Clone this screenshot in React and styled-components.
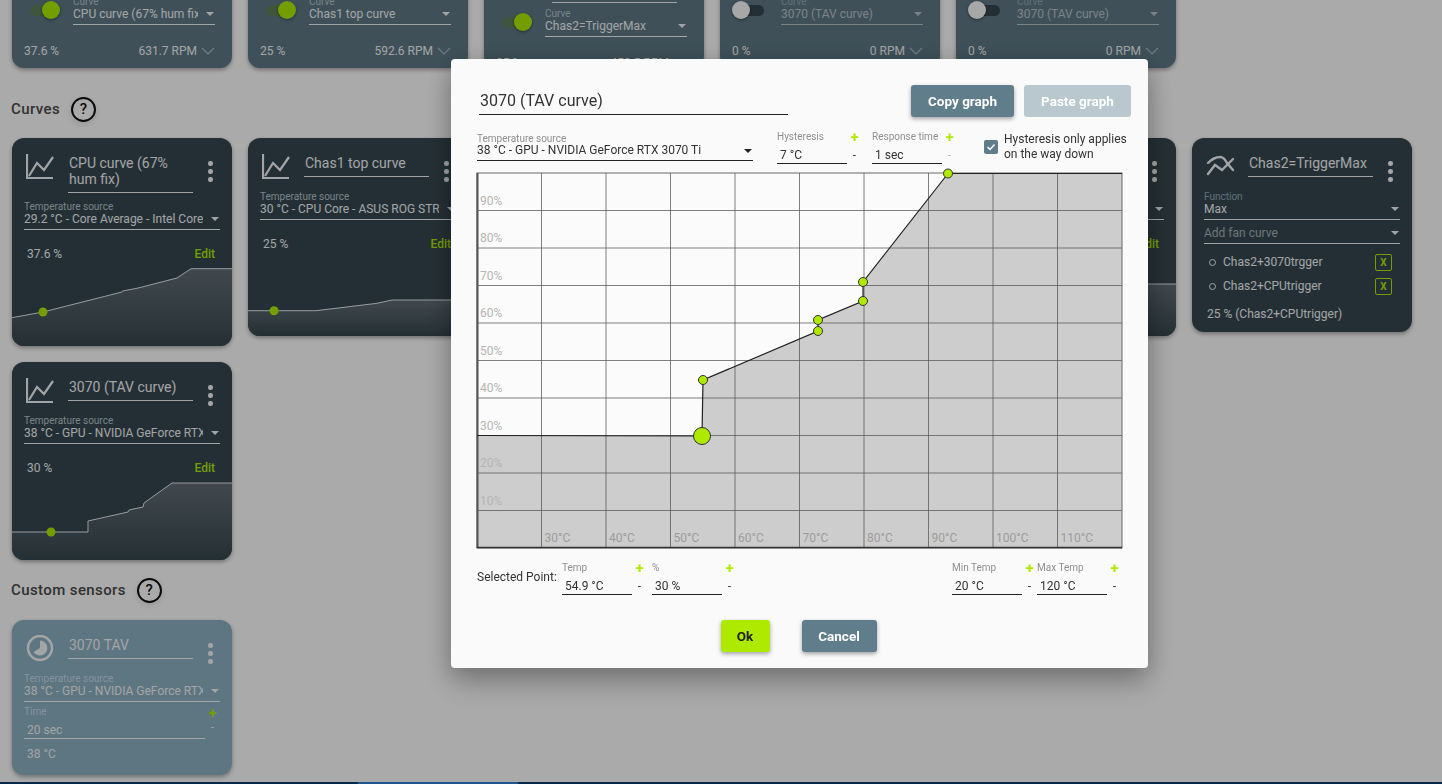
import React from 'react';
import styled, { createGlobalStyle } from 'styled-components';

const GlobalStyle = createGlobalStyle`
  html, body { margin: 0; padding: 0; height: 100%; overflow: hidden; }
  body { font-family: Roboto, "Liberation Sans", sans-serif; background: #fefefe; }
  * { box-sizing: border-box; }
`;

const Page = styled.div`
  height: 784px;
  overflow: hidden;
  display: flex;
  flex-direction: column;
  padding: 0 12px;
`;

const Grid = styled.div`
  display: grid;
  grid-template-columns: repeat(6, 220px);
  gap: 16px;
  align-items: start;
`;

const FanGrid = styled(Grid)`
  margin-top: -40px;
  align-items: stretch;
  flex: none;
`;

const SectionTitle = styled.div`
  display: flex;
  align-items: center;
  gap: 11px;
  height: 24px;
  margin: ${p => p.$top}px 0 ${p => p.$bottom}px -1px;
  font-size: 15px;
  font-weight: 500;
  letter-spacing: 0.4px;
  color: #4a4a4a;
`;

const Help = styled.span`
  width: 25px;
  height: 25px;
  border-radius: 50%;
  border: 2px solid #111;
  display: flex;
  align-items: center;
  justify-content: center;
  font-size: 15px;
  font-weight: 500;
  color: #111;
  box-shadow: 0 2px 6px rgba(0,0,0,.12);
`;

const Spacer = styled.div`
  flex: 1;
`;

const Taskbar = styled.div`
  flex: none;
  display: flex;
  height: 2px;
  margin: 0 -12px;
  padding-left: 358px;
  background: #0f3c70;
`;

const TaskbarActive = styled.span`
  width: 160px;
  background: #2d7fd1;
`;

const Card = styled.div`
  position: relative;
  border-radius: 12px;
  background: #37474f;
  box-shadow: 0 2px 4px rgba(0,0,0,.35);
  color: #f2f5f6;
  overflow: hidden;
`;

const FanCard = styled(Card)`
  height: 108px;
  padding: 37px 12px 0;
  background: #5e7885;
  overflow: visible;
`;

const NameStub = styled.div`
  height: 6px;
  width: 125px;
  margin: 0 0 6px 56px;
  border-bottom: 1px solid #f2f5f6;
`;

const FanRow = styled.div`
  display: flex;
  align-items: center;
`;

const Toggle = styled.div`
  position: relative;
  flex: none;
  width: 49px;
  height: 28px;
  margin-top: -2px;
  &::before {
    content: '';
    position: absolute;
    left: 6px;
    top: 9px;
    width: 26px;
    height: 11px;
    border-radius: 6px;
    background: ${p => (p.$on ? '#5f7f5a' : '#37474f')};
  }
  &::after {
    content: '';
    position: absolute;
    left: ${p => (p.$on ? 18 : 0)}px;
    top: 5px;
    width: 18px;
    height: 18px;
    border-radius: 50%;
    background: ${p => (p.$on ? '#aeea00' : '#fafafa')};
    box-shadow: 0 1px 3px rgba(0,0,0,.4);
  }
`;

const SelectBox = styled.div`
  width: 142px;
  opacity: ${p => (p.$dim ? 0.6 : 1)};
`;

const SmallLabel = styled.div`
  height: 10px;
  font-size: 10px;
  line-height: 10px;
  color: ${p => p.$color || '#b6c4cb'};
  white-space: nowrap;
`;

const SelectWrap = styled.div`
  position: relative;
  height: ${p => p.$height || 18}px;
  padding: ${p => p.$top || 0}px 17px 0 0;
  font-size: 12px;
  line-height: ${p => p.$leading || 14}px;
  color: ${p => p.$color || 'inherit'};
  border-bottom: 1px solid ${p => p.$line || '#f2f5f6'};
  &::after {
    content: '';
    position: absolute;
    right: 1px;
    top: ${p => (p.$top || 0) + 5}px;
    border-left: 4px solid transparent;
    border-right: 4px solid transparent;
    border-top: 4px solid ${p => p.$line || '#f2f5f6'};
  }
`;

const SelectText = styled.div`
  white-space: nowrap;
  overflow: hidden;
`;

const Select = ({ children, ...rest }) => (
  <SelectWrap {...rest}><SelectText>{children}</SelectText></SelectWrap>
);

const FanFooter = styled.div`
  display: flex;
  align-items: center;
  height: 16px;
  margin-top: 18px;
  padding-right: 4px;
  font-size: 12px;
  svg { margin-left: 3px; }
`;

const Rpm = styled.span`
  margin-left: auto;
`;

const CurveHead = styled.div`
  display: flex;
  align-items: flex-start;
  min-height: 54px;
  padding: 15px 12px 9px 14px;
`;

const HeadIcon = styled.svg`
  flex: none;
  width: 30px;
  height: 30px;
  margin-right: 12px;
`;

const NameText = styled.div`
  width: 125px;
  padding: 2px 0 5px 1px;
  font-size: 14px;
  line-height: 16px;
  color: #f2f5f6;
  border-bottom: 1px solid #f2f5f6;
`;

const Kebab = styled.div`
  display: flex;
  flex-direction: column;
  gap: 3.5px;
  margin: 8px 0 0 15px;
  i {
    width: 4.5px;
    height: 4.5px;
    border-radius: 50%;
    background: #f2f5f6;
  }
`;

const CardBody = styled.div`
  padding: 0 12px;
`;

const StatusRow = styled.div`
  display: flex;
  justify-content: space-between;
  height: 16px;
  margin: ${p => p.$top ?? 16}px 0 -1px;
  padding: 0 5px 0 3px;
  font-size: 12px;
  line-height: 16px;
`;

const EditLink = styled.span`
  color: #aeea00;
  font-weight: 500;
`;

const Spark = styled.svg`
  display: block;
  width: 220px;
  height: 85px;
`;

const FunctionCard = styled(Card)`
  height: 194px;
`;

const MemberList = styled.div`
  margin-top: 6px;
`;

const MemberRow = styled.div`
  display: flex;
  align-items: center;
  height: 24px;
  padding: 0 8px 0 5px;
  font-size: 12px;
  &::before {
    content: '';
    width: 5px;
    height: 5px;
    margin-right: 7px;
    border-radius: 50%;
    border: 1px solid #f2f5f6;
  }
`;

const RemoveBtn = styled.span`
  margin-left: auto;
  width: 17px;
  height: 17px;
  border: 1px solid #aeea00;
  border-radius: 2px;
  color: #aeea00;
  font-size: 10px;
  font-weight: 700;
  display: flex;
  align-items: center;
  justify-content: center;
`;

const SensorCard = styled(Card)`
  height: 155px;
  background: #8cafc2;
`;

const SensorField = styled.div`
  display: grid;
  grid-template-columns: 181px 15px;
  grid-template-rows: 12px 20px;
  margin-top: 5px;
  font-size: 12px;
`;

const Overlay = styled.div`
  position: fixed;
  inset: 0;
  background: rgba(0,0,0,.33);
`;

const Dialog = styled.div`
  position: fixed;
  left: 451px;
  top: 59px;
  width: 697px;
  height: 609px;
  padding: 26px 17px 0 26px;
  background: #fafafa;
  border-radius: 4px;
  color: #222;
  box-shadow: 0 16px 30px rgba(0,0,0,.22), 0 4px 24px rgba(0,0,0,.2);
`;

const DialogHead = styled.div`
  display: flex;
  align-items: flex-start;
`;

const DialogName = styled.div`
  width: 309px;
  height: 30px;
  margin: 0 auto 0 2px;
  padding: 6px 0 0 1px;
  font-size: 16px;
  line-height: 20px;
  color: #333;
  border-bottom: 1px solid #222;
`;

const ActionButton = styled.button`
  height: 32px;
  min-width: ${p => p.$width}px;
  margin-left: ${p => p.$gap || 0}px;
  padding: 0;
  border: 0;
  border-radius: 3px;
  font-family: inherit;
  font-size: 13.5px;
  font-weight: 700;
  color: ${p => p.$text || '#fff'};
  background: ${p => p.$bg || '#607d8b'};
  box-shadow: ${p => (p.$flat ? 'none' : '0 2px 4px rgba(0,0,0,.35)')};
`;

const OptionsRow = styled.div`
  display: flex;
  align-items: flex-start;
  margin-top: 14px;
  height: 42px;
`;

const DialogSelect = styled.div`
  width: 276px;
  margin-top: 3px;
`;

const Field = styled.div`
  display: grid;
  grid-template-columns: 70px 15px;
  grid-template-rows: 12px 17px;
  row-gap: 4px;
  margin-left: ${p => p.$left || 0}px;
  font-size: 12px;
  color: #333;
`;

const FieldLabel = styled.span`
  font-size: 10px;
  line-height: 12px;
  color: #8f8f8f;
  white-space: nowrap;
`;

const Plus = styled.span`
  font-size: 15px;
  line-height: 12px;
  font-weight: 700;
  text-align: center;
  color: #aeea00;
`;

const FieldValue = styled.span`
  padding-left: 3px;
  line-height: 16px;
  border-bottom: 1px solid #222;
  white-space: nowrap;
`;

const SensorValue = styled(FieldValue)`
  padding-top: 3px;
  border-color: #f2f5f6;
`;

const Minus = styled.span`
  text-align: center;
  line-height: 16px;
  color: ${p => p.$color || '#444'};
`;

const CheckOption = styled.div`
  display: flex;
  align-items: center;
  gap: 6px;
  margin: 1px 0 0 27px;
  font-size: 12px;
  line-height: 15px;
  color: #333;
`;

const CheckBox = styled.span`
  flex: none;
  width: 14px;
  height: 14px;
  border-radius: 2px;
  background: #607d8b;
  display: flex;
  align-items: center;
  justify-content: center;
`;

const Graph = styled.svg`
  display: block;
  width: 645px;
  height: 376px;
  overflow: visible;
`;

const PointRow = styled.div`
  display: flex;
  align-items: flex-start;
  margin-top: 13px;
`;

const PointTitle = styled.span`
  width: 85px;
  margin-top: 8px;
  font-size: 12px;
  white-space: nowrap;
  color: #333;
`;

const PointEnd = styled.div`
  width: 9px;
`;

const DialogActions = styled.div`
  display: flex;
  justify-content: center;
  gap: 32px;
  margin: 25px 0 0 -11px;
`;

const CurveIcon = () => (
  <HeadIcon viewBox="0 0 30 30" fill="none" stroke="#f2f5f6" strokeWidth="2.2">
    <path d="M1 1v24h26" />
    <path d="M3 23l8-13 7 7 9-13" />
  </HeadIcon>
);

const MixIcon = () => (
  <HeadIcon viewBox="0 0 30 30" fill="none" stroke="#f2f5f6" strokeWidth="2.4" strokeLinecap="round">
    <path d="M2 10c3-3 8-6 12-6 3 0 5 2 7 6l6 7" />
    <path d="M2 21l7-9 7 5 11-11" />
  </HeadIcon>
);

const SensorIcon = () => (
  <HeadIcon viewBox="0 0 30 30">
    <circle cx="14" cy="13" r="12" fill="none" stroke="#f2f5f6" strokeWidth="2.5" />
    <path d="M14 5.500a7.500 7.500 0 1 1-6.500 11.500l6.500-4z" fill="#f2f5f6" />
  </HeadIcon>
);

const Dots = () => (
  <Kebab><i /><i /><i /></Kebab>
);

const fans = [
  { curve: 'CPU curve (67% hum fix)', pct: '37.6 %', rpm: '631.7 RPM', on: true },
  { curve: 'Chas1 top curve', pct: '25 %', rpm: '592.6 RPM', on: true },
  { curve: 'Chas2=TriggerMax', pct: '25 %', rpm: '459.5 RPM', on: true, raised: true },
  { curve: '3070 (TAV curve)', pct: '0 %', rpm: '0 RPM' },
  { curve: '3070 (TAV curve)', pct: '0 %', rpm: '0 RPM' },
];

const FanTile = ({ curve, pct, rpm, on, raised }) => (
  <FanCard>
    {raised && <NameStub />}
    <FanRow>
      <Toggle $on={on} />
      <SelectBox $dim={!on}>
        <SmallLabel>Curve</SmallLabel>
        <Select>{curve}</Select>
      </SelectBox>
    </FanRow>
    <FanFooter>
      <span>{pct}</span>
      <Rpm>{rpm}</Rpm>
      <svg width="16" height="10" viewBox="0 0 16 10" fill="none" stroke="#a9bac2" strokeWidth="1.2">
        <path d="M2 2l6 6 6-6" />
      </svg>
    </FanFooter>
  </FanCard>
);

const Sparkline = ({ id, points, dot }) => {
  const line = points.map(p => p.join(',')).join(' ');
  return (
    <Spark viewBox="0 0 220 85">
      <defs>
        <linearGradient id={id} x1="0" y1="0" x2="0" y2="1">
          <stop offset="0" stopColor="#616d75" />
          <stop offset="1" stopColor="#37474f" />
        </linearGradient>
      </defs>
      <polygon points={`0,85 ${line} 220,85`} fill={`url(#${id})`} />
      <polyline points={line} fill="none" stroke="#e4e8ea" strokeWidth="1" />
      {dot && <circle cx={dot[0]} cy={dot[1]} r="4.500" fill="#aeea00" />}
    </Spark>
  );
};

const CurveTile = ({ name, source, pct, points, dot, id }) => (
  <Card>
    <CurveHead>
      <CurveIcon />
      <NameText>{name}</NameText>
      <Dots />
    </CurveHead>
    <CardBody>
      <SmallLabel>Temperature source</SmallLabel>
      <Select>{source}</Select>
      <StatusRow>
        <span>{pct}</span>
        <EditLink>Edit</EditLink>
      </StatusRow>
    </CardBody>
    <Sparkline id={id} points={points} dot={dot} />
  </Card>
);

const curves = [
  {
    id: 'c1', name: 'CPU curve (67% hum fix)', source: '29.2 °C - Core Average - Intel Core i7', pct: '37.6 %',
    points: [[0, 56.7], [31, 51], [110, 31], [110.5, 30], [125, 27.3], [165, 17], [179, 7.7], [220, 7.7]], dot: [31, 51],
  },
  {
    id: 'c2', name: 'Chas1 top curve', source: '30 °C - CPU Core - ASUS ROG STRIX', pct: '25 %',
    points: [[0, 59.7], [68, 59.7], [129, 52.3], [144, 49], [220, 49]], dot: [26, 59.7],
  },
  {
    id: 'c3', name: 'Chas2 bottom curve', source: '30 °C - CPU Core - ASUS ROG STRIX', pct: '25 %',
    points: [[0, 59.7], [70, 59.7], [130, 45], [180, 20], [220, 8]], dot: [22, 59.7],
  },
  {
    id: 'c4', name: 'Chas2+3070trgger', source: '38 °C - GPU - NVIDIA GeForce RTX 3070 Ti', pct: '25 %',
    points: [[0, 59.7], [80, 59.7], [140, 40], [190, 20], [220, 8]], dot: [39, 59.7],
  },
  {
    id: 'c5', name: 'Chas2+CPUtrigger', source: '30 °C - CPU Core - ASUS ROG STRIX', pct: '25 %',
    points: [[0, 59.7], [100, 59.7], [160, 33], [220, 33]], dot: [22, 59.7],
  },
];

const tavPoints = [[0, 57], [76, 57], [76, 46], [116, 37], [117, 35], [131, 32], [132, 28], [160, 8], [220, 8]];

const W = 645;
const H = 375;
const xAt = t => (t - 20) * 6.45;
const yAt = p => H - p * 3.75;

const nodes = [
  [225, 263, 8.5], [226, 207, 4.5], [341, 158, 4.5], [341, 147, 4.5], [386, 128, 4.5], [386, 109, 4.5], [471, 0.5, 4.5],
];

const Chart = () => {
  const line = [[0, yAt(30)], ...nodes.map(n => [n[0], n[1]]), [W, 0.5]];
  const path = line.map(p => p.join(',')).join(' ');
  return (
    <Graph viewBox="0 0 645 376">
      <rect width={W} height={H} fill="#fbfbfb" />
      <polygon points={`0,${H} ${path} ${W},${H}`} fill="#cdcdcd" />
      {[...Array(9)].map((_, i) => (
        <line key={i} x1={64.5 * (i + 1)} x2={64.5 * (i + 1)} y1="0" y2={H} stroke="#555" strokeWidth="1" strokeOpacity=".75" />
      ))}
      {[...Array(9)].map((_, i) => (
        <line key={i} x1="0" x2={W} y1={37.5 * (i + 1)} y2={37.5 * (i + 1)} stroke="#555" strokeWidth="1" strokeOpacity=".75" />
      ))}
      <rect x="0" y="0" width={W} height={H} fill="none" stroke="#666" strokeWidth="1" />
      <line x1="0.5" x2="0.5" y1="0" y2={H} stroke="#555" strokeWidth="2" />
      <line x1="0" x2={W} y1={H - 0.5} y2={H - 0.5} stroke="#333" strokeWidth="1.5" />
      {[10, 20, 30, 40, 50, 60, 70, 80, 90].map(p => (
        <text key={p} x="3" y={yAt(p) - 6} fontSize="12" fill="#b5b5b5">{p}%</text>
      ))}
      {[30, 40, 50, 60, 70, 80, 90, 100, 110].map(t => (
        <text key={t} x={xAt(t) + 3} y={H - 6} fontSize="12" fill="#9c9c9c">{t}°C</text>
      ))}
      <polyline points={path} fill="none" stroke="#222" strokeWidth="1.2" />
      {nodes.map(([x, y, r]) => (
        <circle key={`${x}-${y}`} cx={x} cy={y} r={r} fill="#aeea00" stroke="#333" strokeWidth="1" />
      ))}
    </Graph>
  );
};

export default function App() {
  return (
    <>
      <GlobalStyle />
      <Page>
        <FanGrid>
          {fans.map((f, i) => <FanTile key={i} {...f} />)}
        </FanGrid>
        <SectionTitle $top={29} $bottom={17}>Curves <Help>?</Help></SectionTitle>
        <Grid>
          {curves.map(c => <CurveTile key={c.id} {...c} />)}
          <FunctionCard>
            <CurveHead>
              <MixIcon />
              <NameText>Chas2=TriggerMax</NameText>
              <Dots />
            </CurveHead>
            <CardBody>
              <SmallLabel $color="#8fa9b6">Function</SmallLabel>
              <Select>Max</Select>
              <Select $height={24} $top={6} $color="#a3b0b7">Add fan curve</Select>
              <MemberList>
                <MemberRow>Chas2+3070trgger<RemoveBtn>X</RemoveBtn></MemberRow>
                <MemberRow>Chas2+CPUtrigger<RemoveBtn>X</RemoveBtn></MemberRow>
              </MemberList>
              <StatusRow $top={8}><span>25 % (Chas2+CPUtrigger)</span></StatusRow>
            </CardBody>
          </FunctionCard>
          <CurveTile id="c6" name="3070 (TAV curve)" source="38 °C - GPU - NVIDIA GeForce RTX 3070 Ti" pct="30 %" points={tavPoints} dot={[39, 57]} />
        </Grid>
        <SectionTitle $top={18} $bottom={18}>Custom sensors <Help>?</Help></SectionTitle>
        <Grid>
          <SensorCard>
            <CurveHead>
              <SensorIcon />
              <NameText>3070 TAV</NameText>
              <Dots />
            </CurveHead>
            <CardBody>
              <SmallLabel $color="#c5dbe6">Temperature source</SmallLabel>
              <Select>38 °C - GPU - NVIDIA GeForce RTX 3070 Ti</Select>
              <SensorField>
                <SmallLabel $color="#c5dbe6">Time</SmallLabel>
                <Plus>+</Plus>
                <SensorValue>20 sec</SensorValue>
                <Minus $color="#e4e9ec">-</Minus>
              </SensorField>
              <StatusRow $top={7}><span>38 °C</span></StatusRow>
            </CardBody>
          </SensorCard>
        </Grid>
        <Spacer />
        <Taskbar><TaskbarActive /></Taskbar>
      </Page>
      <Overlay />
      <Dialog>
        <DialogHead>
          <DialogName>3070 (TAV curve)</DialogName>
          <ActionButton $width={103}>Copy graph</ActionButton>
          <ActionButton $width={107} $gap={10} $bg="#b9c8ce" $flat>Paste graph</ActionButton>
        </DialogHead>
        <OptionsRow>
          <DialogSelect>
            <SmallLabel $color="#8f8f8f">Temperature source</SmallLabel>
            <Select $height={17} $leading={12} $line="#222" $color="#333">38 °C - GPU - NVIDIA GeForce RTX 3070 Ti</Select>
          </DialogSelect>
          <Field $left={24}>
            <FieldLabel>Hysteresis</FieldLabel><Plus>+</Plus>
            <FieldValue>7 °C</FieldValue><Minus>-</Minus>
          </Field>
          <Field $left={10}>
            <FieldLabel>Response time</FieldLabel><Plus>+</Plus>
            <FieldValue>1 sec</FieldValue><Minus $color="#bbb">-</Minus>
          </Field>
          <CheckOption>
            <CheckBox>
              <svg width="10" height="10" viewBox="0 0 10 10" fill="none" stroke="#fff" strokeWidth="1.4"><path d="M1.500 5l2.500 2.500 4.500-5" /></svg>
            </CheckBox>
            <span>Hysteresis only applies<br />on the way down</span>
          </CheckOption>
        </OptionsRow>
        <Chart />
        <PointRow>
          <PointTitle>Selected Point:</PointTitle>
          <Field>
            <FieldLabel>Temp</FieldLabel><Plus>+</Plus>
            <FieldValue>54.9 °C</FieldValue><Minus>-</Minus>
          </Field>
          <Field $left={5}>
            <FieldLabel>%</FieldLabel><Plus>+</Plus>
            <FieldValue>30 %</FieldValue><Minus>-</Minus>
          </Field>
          <Spacer />
          <Field>
            <FieldLabel>Min Temp</FieldLabel><Plus>+</Plus>
            <FieldValue>20 °C</FieldValue><Minus>-</Minus>
          </Field>
          <Field>
            <FieldLabel>Max Temp</FieldLabel><Plus>+</Plus>
            <FieldValue>120 °C</FieldValue><Minus>-</Minus>
          </Field>
          <PointEnd />
        </PointRow>
        <DialogActions>
          <ActionButton $width={49} $bg="#aeea00" $text="#222">Ok</ActionButton>
          <ActionButton $width={75}>Cancel</ActionButton>
        </DialogActions>
      </Dialog>
    </>
  );
}
